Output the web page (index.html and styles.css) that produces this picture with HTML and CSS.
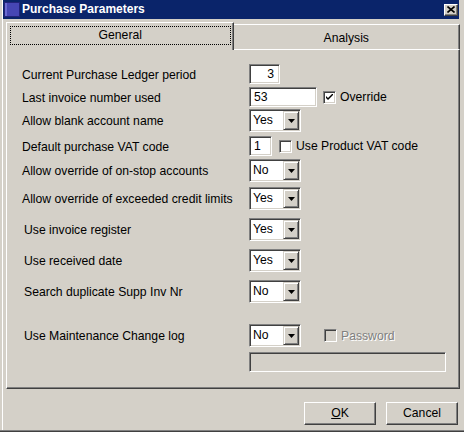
FILE: index.html
```html
<!DOCTYPE html>
<html>
<head>
<meta charset="utf-8">
<title>Purchase Parameters</title>
<link rel="stylesheet" href="styles.css">
</head>
<body>
<div class="window">
  <div class="frame">
    <div class="titlebar">
      <svg class="app-icon" width="16" height="15" viewBox="0 0 16 15">
        <rect x="0.5" y="0.5" width="15" height="14" fill="#4646b4" stroke="#23237a"/>
        <rect x="1" y="1" width="2" height="13" fill="#6a6ad0"/>
      </svg>
      <span class="title">Purchase Parameters</span>
      <span class="close-btn">
        <svg width="8" height="7" viewBox="0 0 8 7"><path d="M0.5 0.5 L7.5 6.5 M7.5 0.5 L0.5 6.5" stroke="#000" stroke-width="1.6"/></svg>
      </span>
    </div>

    <div class="tabs">
      <div class="tab tab-active"><span class="focus">General</span></div>
      <div class="tab tab-inactive">Analysis</div>
    </div>

    <div class="panel">
      <div class="row">
        <span class="label">Current Purchase Ledger period</span>
        <span class="field num">3</span>
      </div>
      <div class="row mt3">
        <span class="label">Last invoice number used</span>
        <span class="field w68">53</span>
        <span class="check ml6"><svg width="7" height="7" viewBox="0 0 7 7"><path d="M0 2 L0 4 L2 6 L7 1 L7 -1 L2 4 Z" fill="#000"/></svg></span>
        <span class="check-label">Override</span>
      </div>
      <div class="row mt2">
        <span class="label">Allow blank account name</span>
        <span class="select"><span class="select-val">Yes</span><span class="select-btn"><svg width="7" height="4" viewBox="0 0 7 4"><path d="M0 0 H7 L3.5 4 Z" fill="#000"/></svg></span></span>
      </div>
      <div class="row mt4">
        <span class="label">Default purchase VAT code</span>
        <span class="field w23">1</span>
        <span class="check ml7"></span>
        <span class="check-label">Use Product VAT code</span>
      </div>
      <div class="row mt3">
        <span class="label">Allow override of on-stop accounts</span>
        <span class="select"><span class="select-val">No</span><span class="select-btn"><svg width="7" height="4" viewBox="0 0 7 4"><path d="M0 0 H7 L3.5 4 Z" fill="#000"/></svg></span></span>
      </div>
      <div class="row mt5">
        <span class="label">Allow override of exceeded credit limits</span>
        <span class="select"><span class="select-val">Yes</span><span class="select-btn"><svg width="7" height="4" viewBox="0 0 7 4"><path d="M0 0 H7 L3.5 4 Z" fill="#000"/></svg></span></span>
      </div>
      <div class="row mt8">
        <span class="label indent">Use invoice register</span>
        <span class="select"><span class="select-val">Yes</span><span class="select-btn"><svg width="7" height="4" viewBox="0 0 7 4"><path d="M0 0 H7 L3.5 4 Z" fill="#000"/></svg></span></span>
      </div>
      <div class="row mt8">
        <span class="label indent">Use received date</span>
        <span class="select"><span class="select-val">Yes</span><span class="select-btn"><svg width="7" height="4" viewBox="0 0 7 4"><path d="M0 0 H7 L3.5 4 Z" fill="#000"/></svg></span></span>
      </div>
      <div class="row mt8">
        <span class="label indent">Search duplicate Supp Inv Nr</span>
        <span class="select"><span class="select-val">No</span><span class="select-btn"><svg width="7" height="4" viewBox="0 0 7 4"><path d="M0 0 H7 L3.5 4 Z" fill="#000"/></svg></span></span>
      </div>
      <div class="row mt21">
        <span class="label indent">Use Maintenance Change log</span>
        <span class="select"><span class="select-val">No</span><span class="select-btn"><svg width="7" height="4" viewBox="0 0 7 4"><path d="M0 0 H7 L3.5 4 Z" fill="#000"/></svg></span></span>
        <span class="check disabled ml23"></span>
        <span class="check-label disabled-text">Password</span>
      </div>
      <div class="row mt5">
        <span class="label"></span>
        <span class="field disabled wide"></span>
      </div>
    </div>

    <div class="buttons">
      <span class="btn"><u>O</u>K</span>
      <span class="btn">Cancel</span>
    </div>
  </div>
</div>
</body>
</html>
```

FILE: styles.css
```css
html, body {
  margin: 0;
  padding: 0;
}
body {
  background: #d4d0c8;
  font-family: "Liberation Sans", Arial, sans-serif;
  font-size: 12.2px;
  color: #000;
}
.window {
  width: 464px;
  height: 432px;
  box-sizing: border-box;
  padding: 0 4px 0 2px;
  box-shadow: inset 0 -1px #404040, inset 0 -2px #808080;
  overflow: hidden;
}
.frame {
  border-left: 1px solid #fff;
  height: 430px;
  display: flex;
  flex-direction: column;
}

/* title bar */
.titlebar {
  height: 19px;
  margin-right: 1px;
  background: #0a246a;
  display: flex;
  align-items: center;
  padding-left: 1px;
}
.app-icon {
  display: block;
  flex: none;
}
.title {
  margin-left: 2px;
  color: #fff;
  font-weight: bold;
  font-size: 12px;
  line-height: 19px;
}
.close-btn {
  margin-left: auto;
  margin-right: 1px;
  width: 14px;
  height: 12px;
  box-sizing: border-box;
  background: #d4d0c8;
  border: 1px solid;
  border-color: #fff #404040 #404040 #fff;
  box-shadow: inset -1px -1px #808080;
  display: flex;
  align-items: center;
  justify-content: center;
}
.close-btn svg { display: block; }

/* tabs */
.tabs {
  margin-top: 3px;
  margin-left: 3px;
  height: 28px;
  display: flex;
  align-items: flex-end;
}
.tab {
  flex: 1;
  box-sizing: border-box;
  text-align: center;
  background: #d4d0c8;
  line-height: 17px;
}
.tab-active {
  height: 28px;
  border-top: 1px solid #fff;
  border-left: 1px solid #fff;
  border-right: 1px solid #404040;
  box-shadow: inset -1px 0 #808080;
  padding-top: 3px;
}
.focus {
  display: block;
  box-sizing: border-box;
  height: 19px;
  margin: 0 2px 0 3px;
  border: 1px dotted #000;
}
.tab-inactive {
  height: 26px;
  border-top: 1px solid #fff;
  border-right: 1px solid #404040;
  border-bottom: 1px solid #fff;
  box-shadow: inset -1px 0 #808080;
  padding-top: 5px;
}

/* panel */
.panel {
  margin-left: 3px;
  height: 339px;
  box-sizing: border-box;
  border-left: 1px solid #fff;
  border-right: 1px solid #404040;
  border-bottom: 1px solid #404040;
  box-shadow: inset -1px -1px #808080;
  padding: 14px 0 0 15px;
}
.row {
  display: flex;
  align-items: center;
}
.mt2 { margin-top: 2px; }
.mt3 { margin-top: 3px; }
.mt4 { margin-top: 4px; }
.mt5 { margin-top: 5px; }
.mt8 { margin-top: 8px; }
.mt21 { margin-top: 21px; }
.label {
  flex: none;
  width: 227px;
  white-space: nowrap;
  padding-top: 1px;
  box-sizing: border-box;
}
.label.indent {
  padding-left: 2px;
}

.field {
  box-sizing: border-box;
  height: 20px;
  background: #fff;
  border: 1px solid;
  border-color: #808080 #fff #fff #808080;
  box-shadow: inset 1px 1px #404040, inset -1px -1px #d4d0c8;
  line-height: 18px;
  padding: 0 4px;
  white-space: nowrap;
}
.num {
  width: 31px;
  text-align: right;
  padding-right: 5px;
}
.w68 { width: 68px; }
.w23 { width: 23px; }
.wide { width: 197px; }
.field.disabled { background: #d4d0c8; }

.select {
  box-sizing: border-box;
  width: 52px;
  height: 23px;
  background: #fff;
  border: 1px solid;
  border-color: #808080 #fff #fff #808080;
  box-shadow: inset 1px 1px #404040, inset -1px -1px #d4d0c8;
  padding: 1px;
  display: flex;
}
.select-val {
  flex: 1;
  padding-left: 2px;
  line-height: 19px;
}
.select-btn {
  width: 16px;
  height: 19px;
  box-sizing: border-box;
  background: #d4d0c8;
  border: 1px solid;
  border-color: #d4d0c8 #404040 #404040 #d4d0c8;
  box-shadow: inset 1px 1px #fff, inset -1px -1px #808080;
  display: flex;
  align-items: center;
  justify-content: center;
}
.select-btn svg { display: block; }

.check {
  flex: none;
  width: 13px;
  height: 13px;
  box-sizing: border-box;
  background: #fff;
  border: 1px solid;
  border-color: #808080 #fff #fff #808080;
  box-shadow: inset 1px 1px #404040, inset -1px -1px #d4d0c8;
  display: flex;
  align-items: center;
  justify-content: center;
}
.check svg { display: block; }
.check.disabled { background: #d4d0c8; }
.ml6 { margin-left: 6px; }
.ml7 { margin-left: 7px; }
.ml23 { margin-left: 23px; }
.check-label {
  margin-left: 4px;
  white-space: nowrap;
}
.disabled-text {
  color: #808080;
  text-shadow: 1px 1px 0 #fff;
}

/* buttons */
.buttons {
  display: flex;
  justify-content: flex-end;
  gap: 10px;
  padding-top: 13px;
  padding-right: 2px;
}
.btn {
  width: 72px;
  height: 23px;
  box-sizing: border-box;
  background: #d4d0c8;
  border: 1px solid;
  border-color: #fff #404040 #404040 #fff;
  box-shadow: inset -1px -1px #808080;
  text-align: center;
  line-height: 20px;
}
.btn u { text-decoration: underline; }
```
